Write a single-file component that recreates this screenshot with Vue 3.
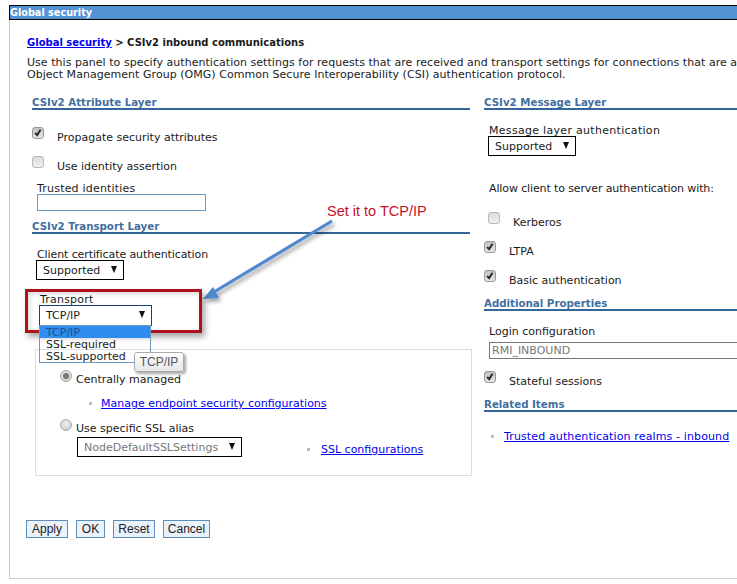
<script setup>
const descLines = [
  'Use this panel to specify authentication settings for requests that are received and transport settings for connections that are a',
  'Object Management Group (OMG) Common Secure Interoperability (CSI) authentication protocol.'
]
</script>

<template>
  <div class="page">
    <div class="frame">
      <header class="titlebar">Global security</header>
      <main class="panel">
        <h1 class="crumb"><a href="#">Global security</a> &gt; CSIv2 inbound communications</h1>
        <p class="desc"><span v-for="l in descLines" :key="l">{{ l }}</span></p>

        <div class="columns">
          <section class="left">
            <h2 class="head">CSIv2 Attribute Layer</h2>
            <label class="row r-prop"><span class="cb on"><svg viewBox="0 0 12 12"><path d="M2.5 6 5 8.5 9 2" /></svg></span><span class="t t1">Propagate security attributes</span></label>
            <label class="row r-use"><span class="cb"></span><span class="t t1">Use identity assertion</span></label>
            <div class="lab l-trust">Trusted identities</div>
            <div class="input trust"></div>
            <h2 class="head h-trans">CSIv2 Transport Layer</h2>
            <div class="lab l-client">Client certificate authentication</div>
            <div class="select s-client"><span>Supported</span><i></i></div>
            <div class="lab l-transport">Transport</div>
            <div class="select s-transport"><span>TCP/IP</span><i></i></div>

            <fieldset class="group">
              <div class="radio-row rr1"><span class="radio on"></span><span class="t">Centrally managed</span></div>
              <div class="link-row lr1"><span class="bullet"></span><a href="#">Manage endpoint security configurations</a></div>
              <div class="radio-row rr2"><span class="radio"></span><span class="t">Use specific SSL alias</span></div>
              <div class="alias-row">
                <div class="select s-alias"><span>NodeDefaultSSLSettings</span><i></i></div>
                <span class="bullet b-ssl"></span><a href="#">SSL configurations</a>
              </div>
            </fieldset>
          </section>

          <section class="right">
            <h2 class="head">CSIv2 Message Layer</h2>
            <div class="lab l-msg">Message layer authentication</div>
            <div class="select s-msg"><span>Supported</span><i></i></div>
            <div class="lab l-allow">Allow client to server authentication with:</div>
            <label class="row r-kerb"><span class="cb"></span><span class="t t1">Kerberos</span></label>
            <label class="row r-ltpa"><span class="cb on"><svg viewBox="0 0 12 12"><path d="M2.5 6 5 8.5 9 2" /></svg></span><span class="t t1">LTPA</span></label>
            <label class="row r-basic"><span class="cb on"><svg viewBox="0 0 12 12"><path d="M2.5 6 5 8.5 9 2" /></svg></span><span class="t t1">Basic authentication</span></label>
            <h2 class="head h-add">Additional Properties</h2>
            <div class="lab l-login">Login configuration</div>
            <div class="input login">RMI_INBOUND</div>
            <label class="row r-state"><span class="cb on"><svg viewBox="0 0 12 12"><path d="M2.5 6 5 8.5 9 2" /></svg></span><span class="t t1">Stateful sessions</span></label>
            <h2 class="head h-rel">Related Items</h2>
            <div class="link-row lr2"><span class="bullet"></span><a href="#">Trusted authentication realms - inbound</a></div>
          </section>
        </div>

        <div class="actions">
          <button class="b-apply">Apply</button>
          <button class="b-ok">OK</button>
          <button class="b-reset">Reset</button>
          <button class="b-cancel">Cancel</button>
        </div>
      </main>
    </div>

    <!-- annotation layer lying over the page -->
    <div class="note">Set it to TCP/IP</div>
    <svg class="arrow" width="737" height="584" viewBox="0 0 737 584">
      <defs>
        <filter id="sh" x="-20%" y="-20%" width="150%" height="150%"><feDropShadow dx="2" dy="3" stdDeviation="2" flood-color="#000" flood-opacity=".4" /></filter>
      </defs>
      <g filter="url(#sh)">
        <path d="M332 221 214 292" stroke="#4f88cf" stroke-width="3.2" fill="none" />
        <path d="M203 299 213 287 219 298Z" fill="#4f88cf" />
      </g>
    </svg>
    <div class="redbox"></div>
    <div class="dropdown">
      <div class="opt sel">TCP/IP</div>
      <div class="opt">SSL-required</div>
      <div class="opt">SSL-supported</div>
    </div>
    <div class="tip">TCP/IP</div>
  </div>
</template>

<style>
html, body { background: #fff; }
</style>

<style scoped>
.page { position: relative; width: 737px; height: 584px; overflow: hidden; background: #fff; font-family: "DejaVu Sans", Verdana, sans-serif; font-size: 11px; color: #1a1a1a; }
.frame { margin-left: 9px; padding-top: 5px; width: 728px; }
.titlebar { height: 13px; line-height: 13px; border: 1px solid #000; border-right: 0; background: #5493d3; color: #fff; font-weight: 700; font-size: 9.7px; padding-left: 0; box-sizing: content-box; }
.panel { border-left: 1px solid #ccc; border-bottom: 1px solid #ccc; height: 559px; box-sizing: border-box; overflow: hidden; padding-left: 17px; }
.crumb { margin: 0; padding-top: 16px; font-size: 10px; line-height: 13px; font-weight: 700; color: #1a1a1a; white-space: nowrap; }
a { color: #0000ee; text-decoration: underline; }
.crumb a { color: #0000ee; }
.desc { margin: 8px 0 0; line-height: 12px; white-space: nowrap; color: #222; letter-spacing: .04px; }
.desc span { display: block; }
.columns { display: grid; grid-template-columns: 438px 300px; column-gap: 14px; margin: 15px 0 0 5px; }
.left, .right { min-width: 0; }
.head { margin: 0; height: 12px; line-height: 12px; padding-bottom: 0; border-bottom: 2px solid #336699; font-size: 10.25px; font-weight: 700; color: #3f6f9f; box-sizing: content-box; white-space: nowrap; }
.row { display: flex; align-items: center; height: 14px; }
.cb { flex: none; align-self: flex-start; width: 12px; height: 12px; box-sizing: border-box; border: 1px solid #bbb; border-radius: 3px; background: linear-gradient(#dcdcdc, #f0f0f0); margin-top: -3px; }
.cb svg { display: block; width: 10px; height: 10px; }
.cb svg path { fill: none; stroke: #2c2c2c; stroke-width: 2.4; }
.cb.on { background: linear-gradient(#c4c4c4, #e6e6e6); border-color: #999; }
.t1 { margin-left: 13px; }
.lab { line-height: 12px; padding-top: 1px; margin-bottom: -1px; }
.r-prop { margin-top: 20px; }
.r-use { margin-top: 15px; }
.l-trust { margin: 9px 0 -1px 5px; letter-spacing: .2px; }
.input { box-sizing: border-box; border: 1px solid #6d9ac0; }
.trust { width: 169px; height: 17px; margin: 0 0 0 5px; }
.h-trans { margin-top: 9px; }
.select { display: flex; align-items: center; justify-content: space-between; box-sizing: border-box; height: 20px; border: 1px solid #000; padding: 0 6px; background: #fff; }
.select i { width: 0; height: 0; border-left: 3.5px solid transparent; border-right: 3.5px solid transparent; border-top: 7px solid #111; margin-top: -2px; }
.l-client { margin: 14px 0 -1px 5px; letter-spacing: -.1px; }
.s-client { width: 88px; margin-left: 4px; }
.l-transport { margin: 13px 0 -1px 8px; letter-spacing: .2px; }
.s-transport { width: 113px; height: 21px; margin-left: 7px; border-color: #17407a; }
.group { margin: 23px 0 0 3px; padding: 0; width: 437px; height: 127px; box-sizing: border-box; border: 1px solid #ddd; }
.radio-row { display: flex; align-items: center; height: 14px; }
.radio { flex: none; align-self: flex-start; width: 12px; height: 12px; box-sizing: border-box; border-radius: 50%; border: 1px solid #aaa; background: radial-gradient(circle at 50% 35%, #eee, #c9c9c9); margin: -2px 4px 0 0; position: relative; }
.radio.on::after { content: ""; position: absolute; left: 2px; top: 2px; width: 6px; height: 6px; border-radius: 50%; background: #777; }
.rr1 { margin: 22px 0 0 24px; }
.link-row { display: flex; align-items: center; height: 13px; }
.lr1 { margin: 11px 0 0 53px; }
.bullet { flex: none; width: 3px; height: 3px; background: #bbb; margin-right: 9px; }
.rr2 { margin: 11px 0 0 24px; }
.alias-row { display: flex; align-items: center; margin: 2px 0 0 41px; }
.s-alias { width: 165px; color: #777; }
.b-ssl { margin: 4px 11px 0 65px; }
.alias-row a { margin-top: 5px; }
.l-msg { margin: 14px 0 -1px 5px; letter-spacing: .3px; }
.s-msg { width: 88px; margin: 0 0 0 4px; }
.l-allow { margin: 26px 0 -1px 5px; letter-spacing: -.12px; }
.r-kerb { margin: 21px 0 0 4px; }
.r-ltpa { margin-top: 15px; }
.r-basic { margin-top: 15px; }
.h-add { margin-top: 10px; }
.l-login { margin: 14px 0 -1px 5px; }
.login { width: 300px; height: 17px; line-height: 15px; margin: 5px 0 0 5px; padding-left: 2px; border-color: #777; color: #777; }
.r-state { margin-top: 15px; }
.h-rel { margin-top: 10px; }
.lr2 { margin: 18px 0 0 7px; letter-spacing: .13px; }
.lr2 .bullet { margin-right: 10px; }
.actions { display: flex; gap: 8px; margin: 44px 0 0 -1px; }
button { height: 18px; padding: 0; box-sizing: border-box; border: 1px solid #5f8fb8; background: #e9f1fb; font-family: "Liberation Sans", Arial, sans-serif; font-size: 12px; color: #222; }
.b-apply { width: 42px; }
.b-ok { width: 29px; }
.b-reset { width: 42px; }
.b-cancel { width: 47px; }
.note { position: absolute; left: 327px; top: 203px; font-family: "Liberation Sans", Arial, sans-serif; font-size: 14.5px; line-height: 17px; color: #c8102e; white-space: nowrap; }
.arrow { position: absolute; left: 0; top: 0; pointer-events: none; }
.redbox { position: absolute; left: 25px; top: 289px; width: 177px; height: 44px; box-sizing: border-box; border: 3px solid #b0101a; box-shadow: 3px 4px 6px rgba(0,0,0,.35), inset 2px 2px 5px rgba(0,0,0,.15); }
.dropdown { position: absolute; left: 39px; top: 325px; width: 112px; height: 38px; box-sizing: border-box; border: 1px solid #6d9ac0; line-height: 14px; }
.opt { padding-left: 6px; height: 12px; }
.opt.sel { background: #2f8df2; color: #1d4f8c; }
.tip { position: absolute; left: 134px; top: 352px; width: 50px; height: 20px; box-sizing: border-box; border: 1px solid #aaa; border-radius: 3px; background: linear-gradient(#fff, #e6e6ec); box-shadow: 2px 2px 3px rgba(0,0,0,.35); font-family: "Liberation Sans", Arial, sans-serif; font-size: 12px; line-height: 18px; text-align: center; color: #555; }
</style>
